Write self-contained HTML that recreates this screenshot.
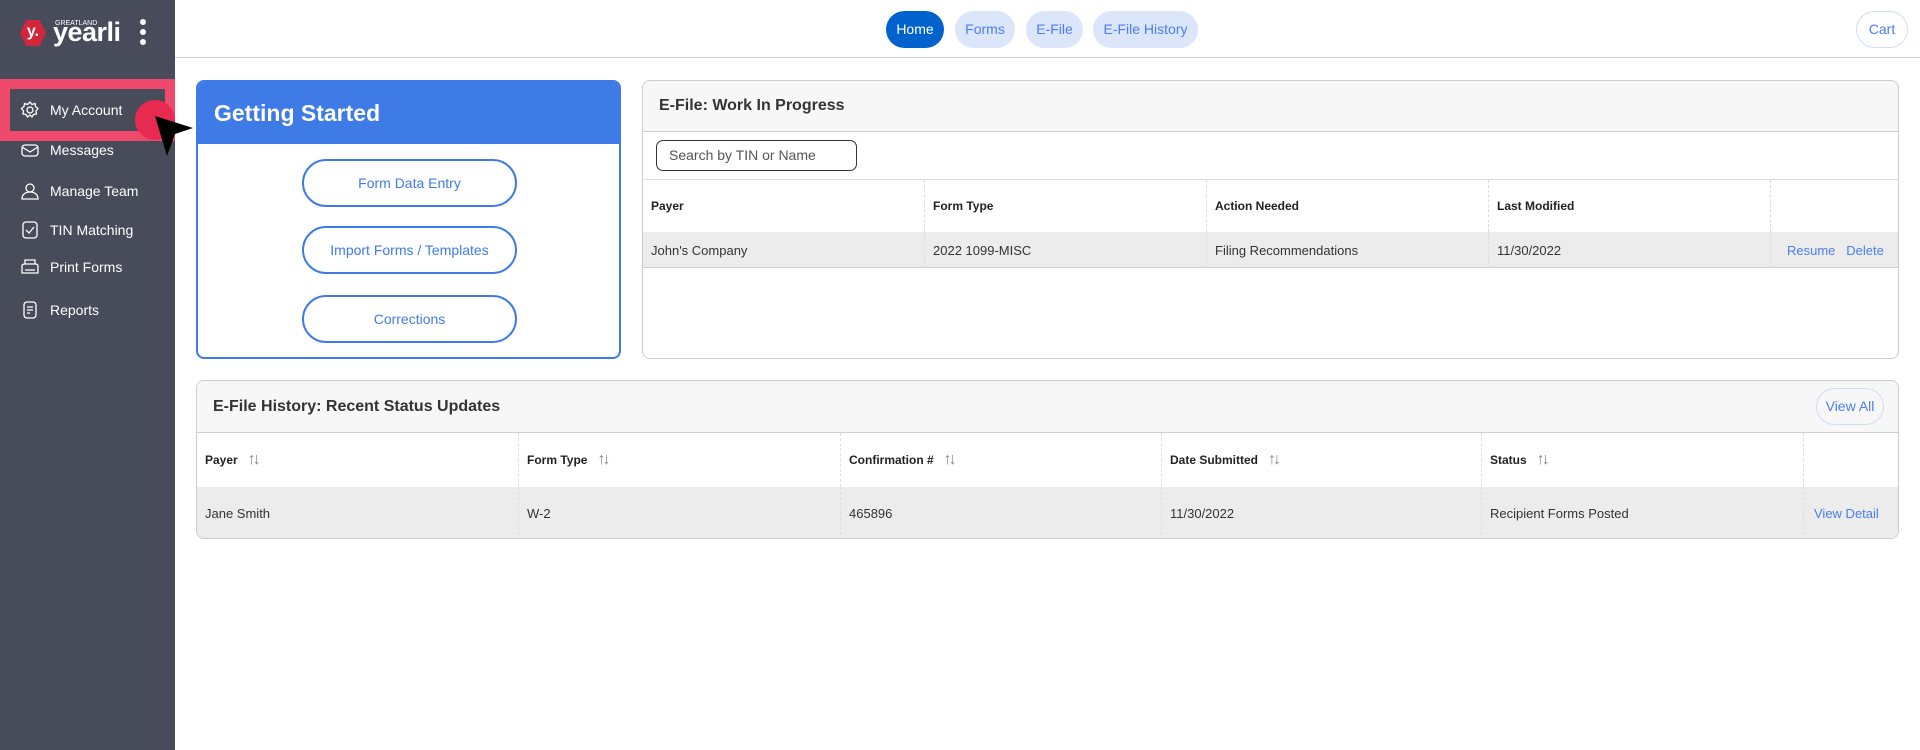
<!DOCTYPE html>
<html><head><meta charset="utf-8"><style>
*{box-sizing:border-box;margin:0;padding:0}
body{width:1920px;height:750px;background:#fff;font-family:"Liberation Sans",Arial,sans-serif;position:relative;overflow:hidden;color:#333}
.side{position:absolute;left:0;top:0;width:175px;height:750px;background:#474b5a}
.top{position:absolute;left:175px;top:0;right:0;height:58px;border-bottom:1px solid #d0d0d0;background:#fff}
.pill{position:absolute;top:11px;height:37px;border-radius:19px;background:#dbe6fb;color:#4a7df0;font-size:14px;line-height:37px;text-align:center}
.mi{position:absolute;left:20px;color:#fff;font-size:14px;display:flex;align-items:center;gap:10px}
.mi svg{width:20px;height:20px}
.card{position:absolute;border:1px solid #ccc;border-radius:8px;overflow:hidden;background:#fff}
.ch{background:#f7f7f7;border-bottom:1px solid #d0d0d0;font-weight:bold;font-size:16px;color:#333;padding-left:16px;display:flex;align-items:center}
.gbtn{position:absolute;left:104px;width:215px;height:48px;border:2px solid #3f7be6;border-radius:24px;color:#3f7be6;font-size:14px;text-align:center;line-height:44px}
.cell{position:absolute;font-size:13px;display:flex;align-items:center;padding-left:8px;border-left:1px dashed #ddd}
.hd{font-weight:bold;font-size:12px;color:#222}
.arr{color:#888;font-size:16px;margin-left:10px;letter-spacing:-3px}
a{color:#4a7df0;text-decoration:none}
</style></head><body>
<div class="side">
  <div style="position:absolute;left:20px;top:20px;width:26px;height:26px;background:#d4263a;clip-path:polygon(25% 0,75% 0,100% 50%,75% 100%,25% 100%,0 50%);color:#fff;font-weight:bold;font-size:16px;text-align:center;line-height:24px">y.</div>
  <div style="position:absolute;left:55px;top:20px;color:#fff;font-size:7px">GREATLAND</div>
  <div style="position:absolute;left:53px;top:17px;color:#fff;font-weight:bold;font-size:27px;letter-spacing:-0.5px">yearli</div>
  <div style="position:absolute;left:140px;top:19px;width:6px;height:6px;border-radius:3px;background:#fff"></div>
  <div style="position:absolute;left:140px;top:29px;width:6px;height:6px;border-radius:3px;background:#fff"></div>
  <div style="position:absolute;left:140px;top:39px;width:6px;height:6px;border-radius:3px;background:#fff"></div>
  <div style="position:absolute;left:0;top:79px;width:175px;height:62px;background:#ef4a6c"></div>
  <div style="position:absolute;left:10px;top:89px;width:155px;height:42px;background:#474b5a"></div>
  <div class="mi" style="top:100px"><svg viewBox="0 0 20 20" fill="none" stroke="#fff" stroke-width="1.3"><circle cx="10" cy="10" r="3"/><path d="M10 2l2 2.5 3-1 .5 3 2.5 2-2 2.5.5 3-3 .5-1.5 2.5-2-2-2.5 2-1.5-2.5-3-.5.5-3-2-2.5 2.5-2 .5-3 3 1z"/></svg>My Account</div>
  <div style="position:absolute;left:135px;top:100px;width:40px;height:40px;border-radius:20px;background:#e92a50"></div>
  <svg style="position:absolute;left:155px;top:116px" width="40" height="44" viewBox="0 0 40 44"><path d="M0 0L38 12 20 18 12 40z" fill="#000"/></svg>
  <div class="mi" style="top:140px"><svg viewBox="0 0 20 20" fill="none" stroke="#fff" stroke-width="1.3"><rect x="2" y="5" width="16" height="11" rx="3"/><path d="M2 7l8 5 8-5"/></svg>Messages</div>
  <div class="mi" style="top:181px"><svg viewBox="0 0 20 20" fill="none" stroke="#fff" stroke-width="1.3"><circle cx="10" cy="7" r="4"/><path d="M2 18c0-5 4-7 8-7s8 2 8 7z"/></svg>Manage Team</div>
  <div class="mi" style="top:220px"><svg viewBox="0 0 20 20" fill="none" stroke="#fff" stroke-width="1.3"><rect x="3" y="2" width="14" height="16" rx="3"/><path d="M6 10l3 3 5-6"/></svg>TIN Matching</div>
  <div class="mi" style="top:257px"><svg viewBox="0 0 20 20" fill="none" stroke="#fff" stroke-width="1.3"><path d="M5 7V3h10v4M2 9q0-2 3-2h10q3 0 3 2v7H2zM5 13h10"/></svg>Print Forms</div>
  <div class="mi" style="top:300px"><svg viewBox="0 0 20 20" fill="none" stroke="#fff" stroke-width="1.3"><rect x="4" y="2" width="12" height="16" rx="3"/><path d="M7 7h6M7 10h6M7 13h3"/></svg>Reports</div>
</div>
<div class="top"></div>
<div class="pill" style="left:886px;width:58px;background:#0062cc;color:#fff">Home</div>
<div class="pill" style="left:955px;width:60px">Forms</div>
<div class="pill" style="left:1026px;width:57px">E-File</div>
<div class="pill" style="left:1093px;width:105px">E-File History</div>
<div class="pill" style="left:1856px;width:52px;background:#fff;border:1px solid #cfdcf5;line-height:35px">Cart</div>

<div class="card" style="left:196px;top:80px;width:425px;height:279px;border:2px solid #3f7be6">
  <div style="height:62px;background:#3f7be6;color:#fff;font-weight:bold;font-size:23px;padding:18px 0 0 16px">Getting Started</div>
  <div class="gbtn" style="top:77px">Form Data Entry</div>
  <div class="gbtn" style="top:144px">Import Forms / Templates</div>
  <div class="gbtn" style="top:213px">Corrections</div>
</div>

<div class="card" style="left:642px;top:80px;width:1257px;height:279px">
  <div class="ch" style="height:51px">E-File: Work In Progress</div>
  <div style="position:absolute;left:13px;top:59px;width:201px;height:31px;border:1px solid #333;border-radius:7px;font-size:14px;color:#555;line-height:29px;padding-left:12px">Search by TIN or Name</div>
  <div style="position:absolute;left:0;top:98px;width:100%;height:1px;background:#ddd"></div>
  <div style="position:absolute;left:0;top:151px;width:100%;height:36px;background:#ececec;border-bottom:1px solid #ccc"></div>
  <div class="cell hd" style="left:0;top:99px;width:281px;height:52px;border-left:none">Payer</div>
  <div class="cell hd" style="left:281px;top:99px;width:282px;height:52px">Form Type</div>
  <div class="cell hd" style="left:563px;top:99px;width:282px;height:52px">Action Needed</div>
  <div class="cell hd" style="left:845px;top:99px;width:282px;height:52px">Last Modified</div>
  <div class="cell" style="left:1127px;top:99px;width:130px;height:52px"></div>
  <div class="cell" style="left:0;top:151px;width:281px;height:36px;border-left:none">John's Company</div>
  <div class="cell" style="left:281px;top:151px;width:282px;height:36px">2022 1099-MISC</div>
  <div class="cell" style="left:563px;top:151px;width:282px;height:36px">Filing Recommendations</div>
  <div class="cell" style="left:845px;top:151px;width:282px;height:36px">11/30/2022</div>
  <div class="cell" style="left:1127px;top:151px;width:130px;height:36px;padding-left:16px"><a>Resume</a>&nbsp;&nbsp;&nbsp;<a>Delete</a></div>
</div>

<div class="card" style="left:196px;top:380px;width:1703px;height:159px">
  <div class="ch" style="height:52px">E-File History: Recent Status Updates</div>
  <div style="position:absolute;left:1619px;top:7px;width:68px;height:37px;border:1px solid #cfdcf5;border-radius:19px;color:#4a7df0;font-size:14px;text-align:center;line-height:35px">View All</div>
  <div style="position:absolute;left:0;top:106px;width:100%;height:53px;background:#ececec"></div>
  <div class="cell hd" style="left:0;top:52px;width:321px;height:54px;border-left:none">Payer<span class="arr">↑↓</span></div>
  <div class="cell hd" style="left:321px;top:52px;width:322px;height:54px">Form Type<span class="arr">↑↓</span></div>
  <div class="cell hd" style="left:643px;top:52px;width:321px;height:54px">Confirmation #<span class="arr">↑↓</span></div>
  <div class="cell hd" style="left:964px;top:52px;width:320px;height:54px">Date Submitted<span class="arr">↑↓</span></div>
  <div class="cell hd" style="left:1284px;top:52px;width:322px;height:54px">Status<span class="arr">↑↓</span></div>
  <div class="cell" style="left:1606px;top:52px;width:97px;height:54px"></div>
  <div class="cell" style="left:0;top:106px;width:321px;height:53px;border-left:none">Jane Smith</div>
  <div class="cell" style="left:321px;top:106px;width:322px;height:53px">W-2</div>
  <div class="cell" style="left:643px;top:106px;width:321px;height:53px">465896</div>
  <div class="cell" style="left:964px;top:106px;width:320px;height:53px">11/30/2022</div>
  <div class="cell" style="left:1284px;top:106px;width:322px;height:53px">Recipient Forms Posted</div>
  <div class="cell" style="left:1606px;top:106px;width:97px;height:53px;padding-left:10px"><a>View Detail</a></div>
</div>
</body></html>
